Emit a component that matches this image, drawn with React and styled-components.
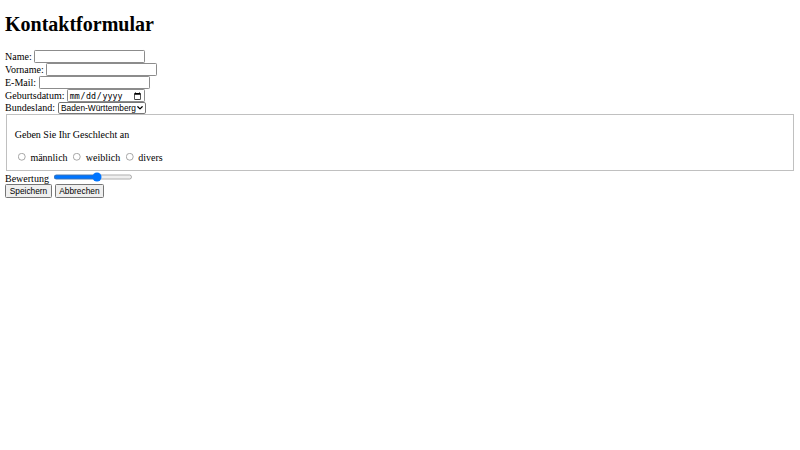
import React from "react";
import styled, { createGlobalStyle } from "styled-components";

const Global = createGlobalStyle`
  html, body { margin: 0; padding: 0; background: #fff; }
  body {
    font-family: "Liberation Serif", "Times New Roman", serif;
    color: #000;
  }
`;

const Page = styled.div`
  zoom: 0.625;
  font-size: 16px;
  padding: 0 8px 8px;
`;

const Heading = styled.h1`
  font-size: 2em;
  font-weight: bold;
  margin: 0.67em 0;
`;

const Form = styled.form`
  margin: 0;
`;

const Label = styled.label``;

const TextInput = styled.input`
  box-sizing: border-box;
  width: ${(p) => (p.type === "date" ? "125px" : "178px")};
  height: 21px;
  border: 2px solid rgb(140, 140, 140);
  border-radius: 2px;
  padding: 1px 2px;
  background: #fff;
`;

const chevron =
  "data:image/svg+xml;utf8," +
  encodeURIComponent(
    '<svg xmlns="http://www.w3.org/2000/svg" width="10" height="7" viewBox="0 0 10 7"><polyline points="1.2,1.2 5,5 8.8,1.2" fill="none" stroke="black" stroke-width="2.2" stroke-linecap="round" stroke-linejoin="round"/></svg>'
  );

const Select = styled.select`
  appearance: none;
  -webkit-appearance: none;
  box-sizing: border-box;
  width: 142px;
  height: 19px;
  padding: 0 14px 0 4px;
  border: 1px solid rgb(118, 118, 118);
  border-radius: 3px;
  background: #fff url("${chevron}") no-repeat right 4px center / 9px 6px;
  font: 13.333px "Liberation Sans", Arial, sans-serif;
  color: #000;
`;

const Fieldset = styled.fieldset`
  margin: 0 2px;
  padding: 0.35em 0.75em 12px;
  border: 2px groove rgb(192, 192, 192);
`;

const Prompt = styled.p`
  margin: 16px 0 17.6px;
`;

const Radio = styled.input``;

const Range = styled.input``;

const Button = styled.button``;

export default function App() {
  return (
    <Page>
      <Global />
      <Heading>Kontaktformular</Heading>
      <Form onSubmit={(e) => e.preventDefault()}>
        <Label htmlFor="name">Name:</Label> <TextInput id="name" type="text" />
        <br />
        <Label htmlFor="vorname">Vorname:</Label> <TextInput id="vorname" type="text" />
        <br />
        <Label htmlFor="email">E-Mail:</Label> <TextInput id="email" type="email" />
        <br />
        <Label htmlFor="geb">Geburtsdatum:</Label> <TextInput id="geb" type="date" />
        <br />
        <Label htmlFor="land">Bundesland:</Label>{" "}
        <Select id="land" defaultValue="bw">
          <option value="bw">Baden-Württemberg</option>
          <option value="by">Bayern</option>
          <option value="be">Berlin</option>
        </Select>
        <br />
        <Fieldset>
          <Prompt>Geben Sie Ihr Geschlecht an</Prompt>
          <Radio type="radio" name="g" id="m" /> <Label htmlFor="m">männlich</Label>{" "}
          <Radio type="radio" name="g" id="w" /> <Label htmlFor="w">weiblich</Label>{" "}
          <Radio type="radio" name="g" id="d" /> <Label htmlFor="d">divers</Label>
        </Fieldset>
        <Label htmlFor="bew">Bewertung</Label>{" "}
        <Range id="bew" type="range" min="1" max="10" defaultValue="6" />
        <br />
        <Button type="submit">Speichern</Button> <Button type="reset">Abbrechen</Button>
      </Form>
    </Page>
  );
}
